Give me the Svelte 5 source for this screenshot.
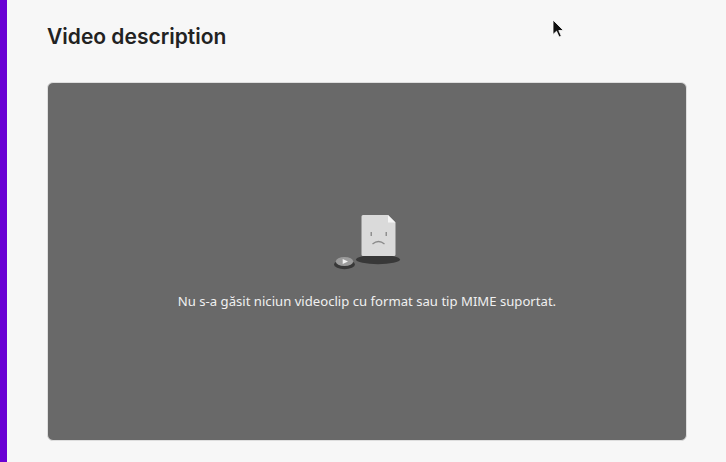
<script>
  const title = 'Video description';
  const message = 'Nu s-a găsit niciun videoclip cu format sau tip MIME suportat.';
</script>

<div class="page">
  <div class="stripe"></div>
  <main class="content">
    <h1>{title}</h1>
    <section class="video">
      <svg class="icon" width="70" height="58" viewBox="0 0 70 58" aria-hidden="true">
        <ellipse cx="46" cy="45.500" rx="22" ry="4.700" fill="#383838"/>
        <path d="M29.500 2.500a1.500 1.500 0 0 1 1.500-1.500H56l7.500 7.500v32a1.500 1.500 0 0 1-1.500 1.500H31a1.500 1.500 0 0 1-1.500-1.500z" fill="#dadada"/>
        <path d="M56 1l7.500 7.500H56z" fill="#f6f6f6"/>
        <rect x="38.500" y="18" width="1.500" height="4" fill="#8f8f8f"/>
        <rect x="53.500" y="18" width="1.500" height="4" fill="#8f8f8f"/>
        <path d="M40.500 30q6-5 12 0" fill="none" stroke="#8a8a8a" stroke-width="1.300"/>
        <ellipse cx="12.500" cy="50.500" rx="10.500" ry="4.700" fill="#383838"/>
        <ellipse cx="12.500" cy="47.500" rx="8.700" ry="4.500" fill="#9b9b9b"/>
        <path d="M10.700 45l5.300 2.500-5.300 2.500z" fill="#f2f2f2"/>
      </svg>
      <p>{message}</p>
    </section>
  </main>
  <svg class="cursor" width="14" height="20" viewBox="0 0 14 20" aria-hidden="true">
    <path d="M1 1v14.500l3.500-3.300 2.600 5.800 2.200-1-2.500-5.500h4.700z" fill="#111" stroke="#fff" stroke-width="0.800"/>
  </svg>
</div>

<style>
  :global(body) {
    margin: 0;
    background: #f7f7f7;
  }
  .page {
    position: relative;
    display: flex;
    width: 726px;
    height: 462px;
    overflow: hidden;
    background: #f7f7f7;
  }
  .stripe {
    width: 7px;
    flex: none;
    background: #6a00d4;
  }
  .content {
    flex: none;
    width: 640px;
    margin-left: 40px;
  }
  h1 {
    margin: 0;
    padding-top: 23px;
    height: 82px;
    box-sizing: border-box;
    font: 600 21px/28px Inter, sans-serif;
    color: #222;
  }
  .video {
    box-sizing: border-box;
    width: 640px;
    height: 359px;
    display: flex;
    flex-direction: column;
    align-items: center;
    padding-top: 131px;
    background: #696969;
    border: 1px solid #dedede;
    border-radius: 6px;
  }
  .icon {
    display: block;
  }
  p {
    margin: 0;
    padding-top: 19px;
    font: 400 13.130px/20px "Noto Sans", sans-serif;
    color: #f0f0f0;
    white-space: nowrap;
  }
  .cursor {
    position: absolute;
    left: 552px;
    top: 19px;
  }
</style>
